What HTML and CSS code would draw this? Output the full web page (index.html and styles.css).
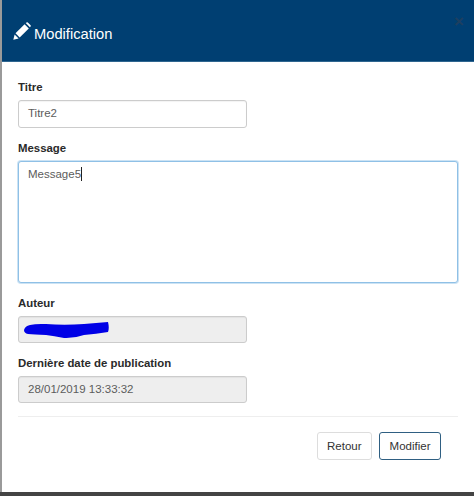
FILE: index.html
```html
<!DOCTYPE html>
<html lang="fr">
<head>
    <meta charset="UTF-8">
    <meta name="viewport" content="width=device-width, initial-scale=1.0">
    <title>Modification</title>
    <link rel="stylesheet" href="styles.css">
</head>
<body>
    <div class="modal">
        <!-- Header -->
        <div class="modal-header">
            <h4 class="modal-title">
                <svg class="pencil" viewBox="0 0 18 18" width="18" height="18">
                    <path d="M0.3 17.7 L1.6 12.4 L5.6 16.4 Z" fill="#fff"/>
                    <path d="M2.5 11.3 L11.6 2.2 L15.8 6.4 L6.7 15.5 Z" fill="#fff"/>
                    <path d="M12.7 1.1 L13.6 0.4 Q14.2 0 14.8 0.4 L17.6 3.2 Q18 3.8 17.6 4.4 L16.9 5.3 Z" fill="#fff"/>
                </svg>
                Modification
            </h4>
            <span class="close">&times;</span>
        </div>

        <!-- Form -->
        <div class="modal-body">
            <div class="form-group">
                <label>Titre</label>
                <div class="field field-short">Titre2</div>
            </div>
            <div class="form-group">
                <label>Message</label>
                <div class="field field-area">Message5<span class="caret"></span></div>
            </div>
            <div class="form-group">
                <label>Auteur</label>
                <div class="field field-short field-disabled">
                    <svg class="scribble" viewBox="0 0 85 17" width="85" height="17">
                        <path d="M0 8 Q1 4 6 3 Q12 1.5 22 2 Q40 3.5 60 2 L84 0 Q85.5 6 84 10 Q72 12 60 13 Q50 16.5 40 16 Q30 14 22 13 Q10 12.5 4 12 Q0 11 0 8 Z" fill="#0000e6"/>
                    </svg>
                </div>
            </div>
            <div class="form-group">
                <label>Dernière date de publication</label>
                <div class="field field-short field-disabled">28/01/2019 13:33:32</div>
            </div>
        </div>

        <!-- Footer -->
        <div class="modal-footer">
            <button class="btn">Retour</button>
            <button class="btn btn-focus">Modifier</button>
        </div>
    </div>
</body>
</html>
```

FILE: styles.css
```css
body {
    margin: 0;
    height: 496px;
    overflow: hidden;
    font-family: "Liberation Sans", Arial, sans-serif;
    font-size: 12px;
    color: #333;
    background-color: #444;
}
.modal {
    height: 492px;
    margin-left: 2px;
    background-color: #fff;
    box-shadow: -2px 0 0 #9a9a9a;
}
.modal-header {
    display: flex;
    justify-content: space-between;
    height: 62px;
    padding: 26px 10px 0 11px;
    box-sizing: border-box;
    background-color: #003f72;
    border-bottom: 1px solid #2f6690;
}
.modal-title {
    display: flex;
    align-items: center;
    align-self: flex-start;
    gap: 3px;
    margin: 0;
    font-size: 14.7px;
    font-weight: normal;
    color: #fff;
}
.pencil {
    margin-top: -6px;
}
.close {
    font-size: 17px;
    font-weight: bold;
    line-height: 1;
    color: #1e3f60;
    margin-top: -13px;
}
.modal-body {
    padding: 18px 16px 0;
}
.form-group {
    margin-bottom: 13px;
}
label {
    display: block;
    height: 14px;
    line-height: 14px;
    margin-bottom: 6px;
    font-size: 11.4px;
    font-weight: bold;
    color: #2a2a2a;
}
.field {
    box-sizing: border-box;
    height: 28px;
    padding: 0 9px;
    line-height: 25px;
    font-size: 11.5px;
    color: #5c5c5c;
    background-color: #fff;
    border: 1px solid #ccc;
    border-radius: 3px;
    box-shadow: inset 0 1px 1px rgba(0, 0, 0, 0.05);
}
.field-short {
    width: 229px;
}
.field-area {
    height: 122px;
    width: 440px;
    border-color: #8fc0e6;
    box-shadow: 0 0 0 1px rgba(143, 192, 230, 0.45);
    line-height: 22px;
    padding-top: 1px;
}
.caret {
    display: inline-block;
    width: 1px;
    height: 14px;
    background-color: #222;
    vertical-align: -3px;
}
.field-disabled {
    position: relative;
    height: 27px;
    background-color: #eee;
}
.scribble {
    position: absolute;
    left: 5px;
    top: 5px;
}
.modal-footer {
    display: flex;
    justify-content: flex-end;
    gap: 7px;
    margin: 0 16px;
    padding: 15px 17px 0 0;
    border-top: 1px solid #eee;
}
.btn {
    height: 28px;
    padding: 0 9.5px;
    font-family: inherit;
    font-size: 11.5px;
    color: #333;
    background-color: #fff;
    border: 1px solid #ddd;
    border-radius: 3px;
}
.btn-focus {
    border-color: #2f5f82;
}
```
